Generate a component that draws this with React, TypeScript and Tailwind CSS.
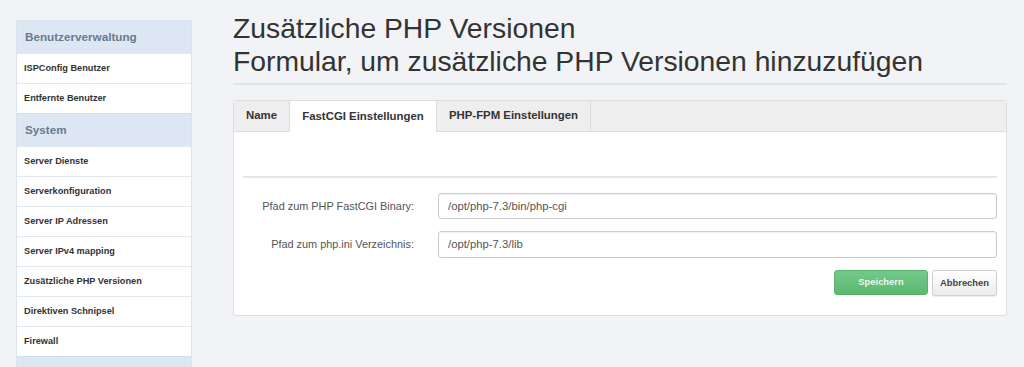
import React from "react";

const Header = ({ label, first }: { label: string; first?: boolean }) => (
  <div
    className={
      "flex items-center pl-[8px] bg-[#dde7f3] text-[#687a90] text-[11.7px] font-bold " +
      (first ? "h-[32px]" : "h-[33px] border-t border-[#d5dfea]")
    }
  >
    {label}
  </div>
);

const Item = ({ label }: { label: string }) => (
  <div className="flex items-center h-[30px] pl-[7px] border-t border-[#e2e8ef] bg-white text-[#333] text-[9.2px] font-bold">
    {label}
  </div>
);

export default function App() {
  return (
    <div className="w-[1024px] h-[367px] overflow-hidden bg-[#f1f3f6] flex font-['Liberation_Sans',Arial,sans-serif]">
      <aside className="ml-[16px] mt-[20px] w-[176px] self-start border border-[#dbe3ec] bg-white">
        <Header label="Benutzerverwaltung" first />
        <Item label="ISPConfig Benutzer" />
        <Item label="Entfernte Benutzer" />
        <Header label="System" />
        <Item label="Server Dienste" />
        <Item label="Serverkonfiguration" />
        <Item label="Server IP Adressen" />
        <Item label="Server IPv4 mapping" />
        <Item label="Zusätzliche PHP Versionen" />
        <Item label="Direktiven Schnipsel" />
        <Item label="Firewall" />
        <Header label="" />
      </aside>

      <main className="ml-[41px] w-[774px]">
        <h1 className="mt-[12px] text-[28.3px] leading-[33px] text-[#333] font-normal">
          <div>Zusätzliche PHP Versionen</div>
          <div>Formular, um zusätzliche PHP Versionen hinzuzufügen</div>
        </h1>
        <div className="mt-[5px] border-t-2 border-[#e1e4e8]" />

        <div className="mt-[15px] border border-[#dcdcdc] rounded-[3px] bg-white">
          <div className="flex h-[31px] bg-[#eeeeee] border-b border-[#dddddd] rounded-t-[3px]">
            <div className="flex items-center px-[12px] w-[56px] border-r border-[#dddddd] text-[11.4px] font-bold text-[#333]">
              Name
            </div>
            <div className="flex items-center justify-center w-[147px] h-[31px] bg-white border-r border-[#dddddd] text-[11.4px] font-bold text-[#333]">
              FastCGI Einstellungen
            </div>
            <div className="flex items-center justify-center w-[154px] border-r border-[#dddddd] text-[11.4px] font-bold text-[#333]">
              PHP-FPM Einstellungen
            </div>
          </div>

          <div className="px-[9px] pb-[19px]">
            <div className="h-[44px]" />
            <div className="border-t-2 border-[#e5e5e5]" />
            <div className="mt-[15px] flex flex-col gap-[12px]">
              <div className="flex items-center">
                <label className="w-[171px] text-right text-[10.9px] text-[#555]">
                  Pfad zum PHP FastCGI Binary:
                </label>
                <div className="ml-[24px] flex-1 h-[26px] flex items-center pl-[9px] border border-[#cccccc] rounded-[3px] shadow-[inset_0_1px_1px_rgba(0,0,0,0.06)] text-[11.3px] text-[#555]">
                  /opt/php-7.3/bin/php-cgi
                </div>
              </div>
              <div className="flex items-center">
                <label className="w-[171px] text-right text-[10.9px] text-[#555]">
                  Pfad zum php.ini Verzeichnis:
                </label>
                <div className="ml-[24px] flex-1 h-[27px] flex items-center pl-[9px] border border-[#cccccc] rounded-[3px] shadow-[inset_0_1px_1px_rgba(0,0,0,0.06)] text-[11.3px] text-[#555]">
                  /opt/php-7.3/lib
                </div>
              </div>
            </div>
            <div className="mt-[12px] flex justify-end gap-[4px]">
              <button className="w-[94px] h-[25px] rounded-[3px] border border-[#58b36a] bg-gradient-to-b from-[#74c98a] to-[#5cb870] text-[#eaf7ec] text-[9.4px] font-bold">
                Speichern
              </button>
              <button className="w-[65px] h-[26px] rounded-[3px] border border-[#cfcfcf] bg-gradient-to-b from-[#ffffff] to-[#ececec] text-[#444] text-[9.4px] font-bold shadow-[0_1px_1px_rgba(0,0,0,0.08)]">
                Abbrechen
              </button>
            </div>
          </div>
        </div>
      </main>
    </div>
  );
}
